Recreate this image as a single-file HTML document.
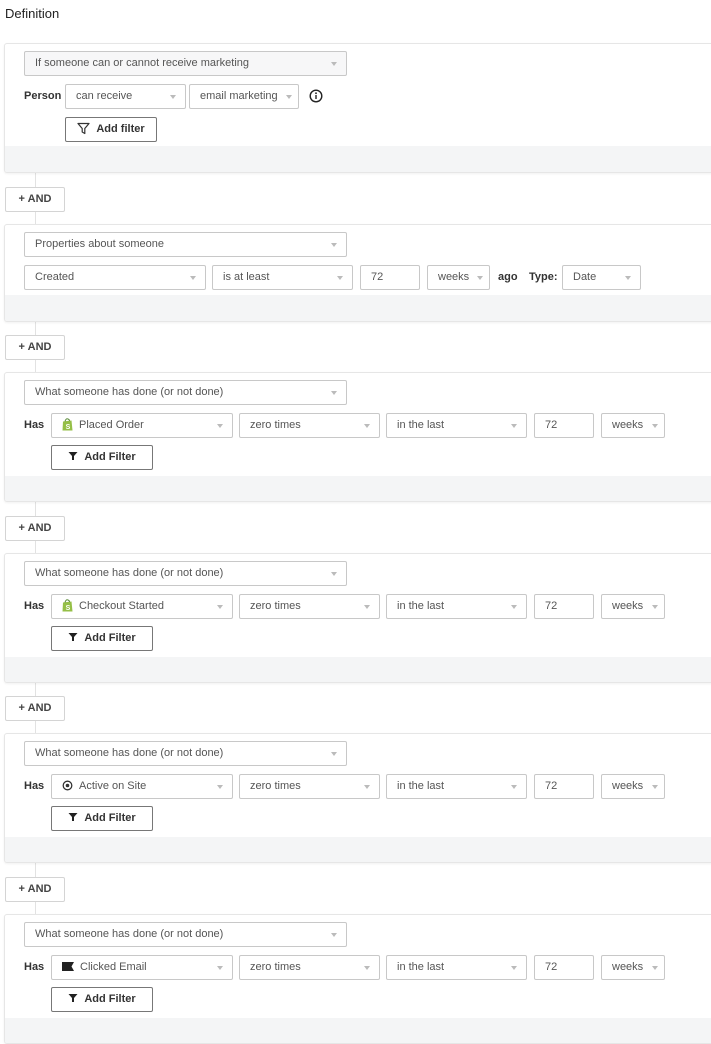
<!DOCTYPE html>
<html><head><meta charset="utf-8"><style>
*{box-sizing:border-box;margin:0;padding:0}
body{width:711px;height:1024px;overflow:hidden;background:#fff;font-family:"Liberation Sans",sans-serif;font-size:11px;color:#555;position:relative}
.h{position:absolute;left:5px;top:6px;font-size:13px;color:#222}
.vl{position:absolute;left:35px;width:1px;background:#e2e2e2}
.card{position:absolute;left:4px;width:720px;border:1px solid #e6e6e6;border-radius:3px;background:#fff;box-shadow:0 1px 2px rgba(0,0,0,.06);overflow:hidden}
.gray{position:absolute;left:0;right:0;bottom:0;background:#f4f5f6}
.dd,.in{position:absolute;height:25px;border:1px solid #c8c8c8;border-radius:2px;background:#fff;padding-left:10px;line-height:23px;white-space:nowrap;color:#555}
.dd::after{content:"";position:absolute;right:9px;top:10px;border-left:3.5px solid transparent;border-right:3.5px solid transparent;border-top:4px solid #bbb}
.dd.s::after{right:6px}
.lbl{position:absolute;font-weight:bold;color:#333;line-height:25px}
.btn{position:absolute;height:25px;border:1px solid #777;border-radius:2px;background:#fff;font-weight:bold;color:#333;line-height:23px;text-align:center}
.and{position:absolute;left:5px;width:60px;height:25px;border:1px solid #d4d4d4;border-radius:2px;background:#fff;font-weight:bold;color:#444;line-height:23px;text-align:center;font-size:11px}
.ic{display:inline-block;vertical-align:middle;margin-right:6px;position:relative;top:-1px}
</style></head><body>
<div class="h">Definition</div>

<div class="vl" style="top:173px;height:52px"></div>
<div class="vl" style="top:322px;height:51px"></div>
<div class="vl" style="top:502px;height:52px"></div>
<div class="vl" style="top:682px;height:52px"></div>
<div class="vl" style="top:863px;height:52px"></div>

<!-- card 1 -->
<div class="card" style="top:43px;height:130px">
  <div class="gray" style="height:26px"></div>
  <div class="dd" style="left:19px;top:7px;width:323px;background:#f7f7f8">If someone can or cannot receive marketing</div>
  <div class="lbl" style="left:19px;top:40px">Person</div>
  <div class="dd" style="left:60px;top:40px;width:121px">can receive</div>
  <div class="dd s" style="left:184px;top:40px;width:110px">email marketing</div>
  <svg style="position:absolute;left:304px;top:45px" width="14" height="14" viewBox="0 0 14 14"><circle cx="7" cy="7" r="5.8" fill="none" stroke="#222" stroke-width="1.4"/><rect x="6.3" y="6" width="1.4" height="4" fill="#222"/><circle cx="7" cy="4.2" r=".9" fill="#222"/></svg>
  <div class="btn" style="left:60px;top:73px;width:92px"><svg class="ic" width="13" height="13" viewBox="0 0 13 13"><path d="M1 1.5h11L7.8 6.5v5L5.2 10V6.5Z" fill="none" stroke="#333" stroke-width="1.2" stroke-linejoin="round"/></svg>Add filter</div>
</div>
<div class="and" style="top:187px">+ AND</div>

<!-- card 2 -->
<div class="card" style="top:224px;height:98px">
  <div class="gray" style="height:26px"></div>
  <div class="dd" style="left:19px;top:7px;width:323px">Properties about someone</div>
  <div class="dd" style="left:19px;top:40px;width:182px">Created</div>
  <div class="dd" style="left:207px;top:40px;width:141px">is at least</div>
  <div class="in" style="left:355px;top:40px;width:60px">72</div>
  <div class="dd s" style="left:422px;top:40px;width:63px">weeks</div>
  <div class="lbl" style="left:493px;top:40px">ago</div>
  <div class="lbl" style="left:524px;top:40px">Type:</div>
  <div class="dd" style="left:557px;top:40px;width:79px">Date</div>
</div>
<div class="and" style="top:335px">+ AND</div>

<!-- event cards -->
<div class="card" style="top:372px;height:130px">
  <div class="gray" style="height:25px"></div>
  <div class="dd" style="left:19px;top:7px;width:323px">What someone has done (or not done)</div>
  <div class="lbl" style="left:19px;top:40px">Has</div>
  <div class="dd" style="left:46px;top:40px;width:182px"><svg class="ic" width="11" height="13" viewBox="0 0 11 13"><path d="M1 3.5L9.5 2.5 10.5 12.5 0.5 12.5Z" fill="#95bf47"/><path d="M3 3.5Q4 0 6 1Q7.5 1.5 7.5 3" fill="none" stroke="#5e8e3e" stroke-width="1"/><text x="3.6" y="11" font-size="7" font-weight="bold" fill="#fff" font-family="Liberation Sans">S</text></svg>Placed Order</div>
  <div class="dd" style="left:234px;top:40px;width:141px">zero times</div>
  <div class="dd" style="left:381px;top:40px;width:141px">in the last</div>
  <div class="in" style="left:529px;top:40px;width:60px">72</div>
  <div class="dd s" style="left:596px;top:40px;width:64px">weeks</div>
  <div class="btn" style="left:46px;top:72px;width:102px"><svg class="ic" width="10" height="10" viewBox="0 0 10 10"><path d="M0.5 1h9L6 5v4H4V5Z" fill="#222"/></svg>Add Filter</div>
</div>
<div class="and" style="top:516px">+ AND</div>

<div class="card" style="top:553px;height:130px">
  <div class="gray" style="height:25px"></div>
  <div class="dd" style="left:19px;top:7px;width:323px">What someone has done (or not done)</div>
  <div class="lbl" style="left:19px;top:40px">Has</div>
  <div class="dd" style="left:46px;top:40px;width:182px"><svg class="ic" width="11" height="13" viewBox="0 0 11 13"><path d="M1 3.5L9.5 2.5 10.5 12.5 0.5 12.5Z" fill="#95bf47"/><path d="M3 3.5Q4 0 6 1Q7.5 1.5 7.5 3" fill="none" stroke="#5e8e3e" stroke-width="1"/><text x="3.6" y="11" font-size="7" font-weight="bold" fill="#fff" font-family="Liberation Sans">S</text></svg>Checkout Started</div>
  <div class="dd" style="left:234px;top:40px;width:141px">zero times</div>
  <div class="dd" style="left:381px;top:40px;width:141px">in the last</div>
  <div class="in" style="left:529px;top:40px;width:60px">72</div>
  <div class="dd s" style="left:596px;top:40px;width:64px">weeks</div>
  <div class="btn" style="left:46px;top:72px;width:102px"><svg class="ic" width="10" height="10" viewBox="0 0 10 10"><path d="M0.5 1h9L6 5v4H4V5Z" fill="#222"/></svg>Add Filter</div>
</div>
<div class="and" style="top:696px">+ AND</div>

<div class="card" style="top:733px;height:130px">
  <div class="gray" style="height:25px"></div>
  <div class="dd" style="left:19px;top:7px;width:323px">What someone has done (or not done)</div>
  <div class="lbl" style="left:19px;top:40px">Has</div>
  <div class="dd" style="left:46px;top:40px;width:182px"><svg class="ic" width="11" height="11" viewBox="0 0 11 11"><circle cx="5.5" cy="5.5" r="4.3" fill="none" stroke="#333" stroke-width="1.3"/><circle cx="5.5" cy="5.5" r="1.8" fill="#333"/></svg>Active on Site</div>
  <div class="dd" style="left:234px;top:40px;width:141px">zero times</div>
  <div class="dd" style="left:381px;top:40px;width:141px">in the last</div>
  <div class="in" style="left:529px;top:40px;width:60px">72</div>
  <div class="dd s" style="left:596px;top:40px;width:64px">weeks</div>
  <div class="btn" style="left:46px;top:72px;width:102px"><svg class="ic" width="10" height="10" viewBox="0 0 10 10"><path d="M0.5 1h9L6 5v4H4V5Z" fill="#222"/></svg>Add Filter</div>
</div>
<div class="and" style="top:877px">+ AND</div>

<div class="card" style="top:914px;height:130px">
  <div class="gray" style="height:25px"></div>
  <div class="dd" style="left:19px;top:7px;width:323px">What someone has done (or not done)</div>
  <div class="lbl" style="left:19px;top:40px">Has</div>
  <div class="dd" style="left:46px;top:40px;width:182px"><svg class="ic" width="12" height="9" viewBox="0 0 12 9"><path d="M0 0h12L9.5 4.5 12 9H0Z" fill="#222"/></svg>Clicked Email</div>
  <div class="dd" style="left:234px;top:40px;width:141px">zero times</div>
  <div class="dd" style="left:381px;top:40px;width:141px">in the last</div>
  <div class="in" style="left:529px;top:40px;width:60px">72</div>
  <div class="dd s" style="left:596px;top:40px;width:64px">weeks</div>
  <div class="btn" style="left:46px;top:72px;width:102px"><svg class="ic" width="10" height="10" viewBox="0 0 10 10"><path d="M0.5 1h9L6 5v4H4V5Z" fill="#222"/></svg>Add Filter</div>
</div>
</body></html>
